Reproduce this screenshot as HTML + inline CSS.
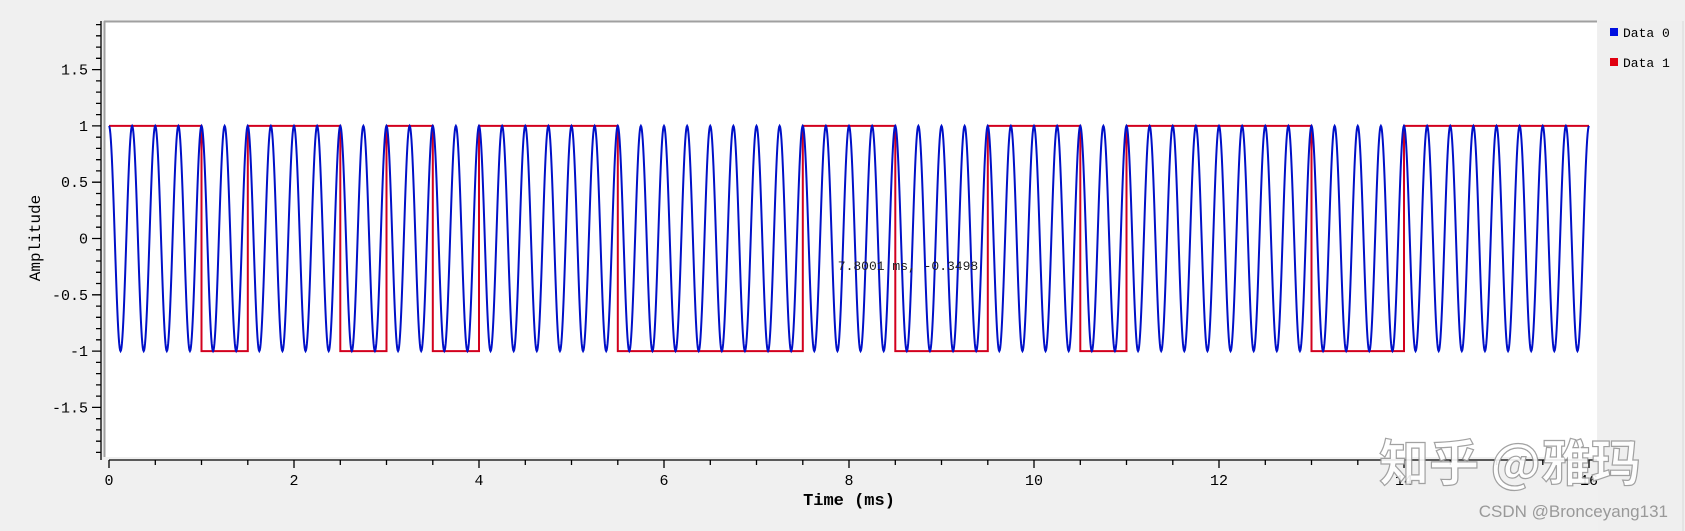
<!DOCTYPE html>
<html><head><meta charset="utf-8"><style>
html,body{margin:0;padding:0;background:#f0f0f0;width:1685px;height:531px;overflow:hidden}
svg{display:block}
text{font-family:"Liberation Mono","Noto Sans CJK SC",monospace}
</style></head><body>
<svg id="s" width="1685" height="531" xmlns="http://www.w3.org/2000/svg">
<rect x="0" y="0" width="1685" height="531" fill="#f0f0f0"/>
<rect x="104" y="21" width="1493" height="436" fill="#fff"/>
<path d="M104.5 21V457 M104 21.5H1597" stroke="#a0a0a0" stroke-width="2" fill="none"/>
<rect x="1598" y="21" width="85" height="510" fill="#efefef"/>
<line x1="1683" y1="21" x2="1683" y2="531" stroke="#d8d8d8"/>
<g id="ax" stroke="#000" stroke-width="1.3" fill="none"></g>
<g font-size="15" fill="#000" id="lbl"></g>
<text x="849" y="505" font-size="17" font-weight="bold" text-anchor="middle">Time (ms)</text>
<text transform="translate(40,238) rotate(-90)" font-size="16" text-anchor="middle">Amplitude</text>
<path id="sq" fill="none" stroke="#d2001e" stroke-width="2"/>
<path id="sn" fill="none" stroke="#0010c8" stroke-width="2"/>
<text x="908" y="270" font-size="13" text-anchor="middle" fill="#222">7.8001 ms, -0.3498</text>
<rect x="1610" y="28" width="8" height="8" fill="#0010e0"/>
<text x="1623" y="37" font-size="13">Data 0</text>
<rect x="1610" y="58" width="8" height="8" fill="#e00010"/>
<text x="1623" y="67" font-size="13">Data 1</text>
<text x="1510" y="481" font-size="50" font-weight="bold" text-anchor="middle" fill="#fff" stroke="#999" stroke-width="1.2" style="font-family:'Noto Sans CJK SC',sans-serif;opacity:.9">知乎 @雅玛</text>
<text x="1668" y="517" font-size="17" text-anchor="end" fill="#999" style="font-family:'Liberation Sans',sans-serif">CSDN @Bronceyang131</text>
</svg>
<script>
var X=function(t){return 109+t*92.5},Y=function(v){return 238.5-v*112.6};
var ax='M101 21V460 M109 460H1597';
for(var i=-19;i<=19;i++){var y=Y(i/10);ax+=' M'+(i%5==0?92:96)+' '+y.toFixed(1)+'H101';}
for(var i=0;i<=32;i++){var x=X(i/2);ax+=' M'+x.toFixed(1)+' 460V'+(i%4==0?468:465);}
var g=document.getElementById('ax');var p=document.createElementNS('http://www.w3.org/2000/svg','path');p.setAttribute('d',ax);g.appendChild(p);
var L=document.getElementById('lbl'),h='';
[1.5,1,0.5,0,-0.5,-1,-1.5].forEach(function(v){h+='<text x="88" y="'+(Y(v)+5)+'" text-anchor="end">'+v+'</text>';});
for(var t=0;t<=16;t+=2)h+='<text x="'+X(t)+'" y="485" text-anchor="middle">'+t+'</text>';
L.innerHTML=h;
var segs=[[0,1,1],[1,1.5,-1],[1.5,2.5,1],[2.5,3,-1],[3,3.5,1],[3.5,4,-1],[4,5.5,1],[5.5,7.5,-1],[7.5,8.5,1],[8.5,9.5,-1],[9.5,10.5,1],[10.5,11,-1],[11,13,1],[13,14,-1],[14,16,1]];
var d='M'+X(0)+' '+Y(1);
segs.forEach(function(s){d+=' L'+X(s[0]).toFixed(1)+' '+Y(s[2]).toFixed(1)+' L'+X(s[1]).toFixed(1)+' '+Y(s[2]).toFixed(1);});
document.getElementById('sq').setAttribute('d',d);
var n='';for(var k=0;k<=3200;k++){var t=k*0.005;n+=(k?'L':'M')+X(t).toFixed(2)+' '+Y(Math.cos(2*Math.PI*4*t)).toFixed(2)+' ';}
document.getElementById('sn').setAttribute('d',n);
</script>
</body></html>
